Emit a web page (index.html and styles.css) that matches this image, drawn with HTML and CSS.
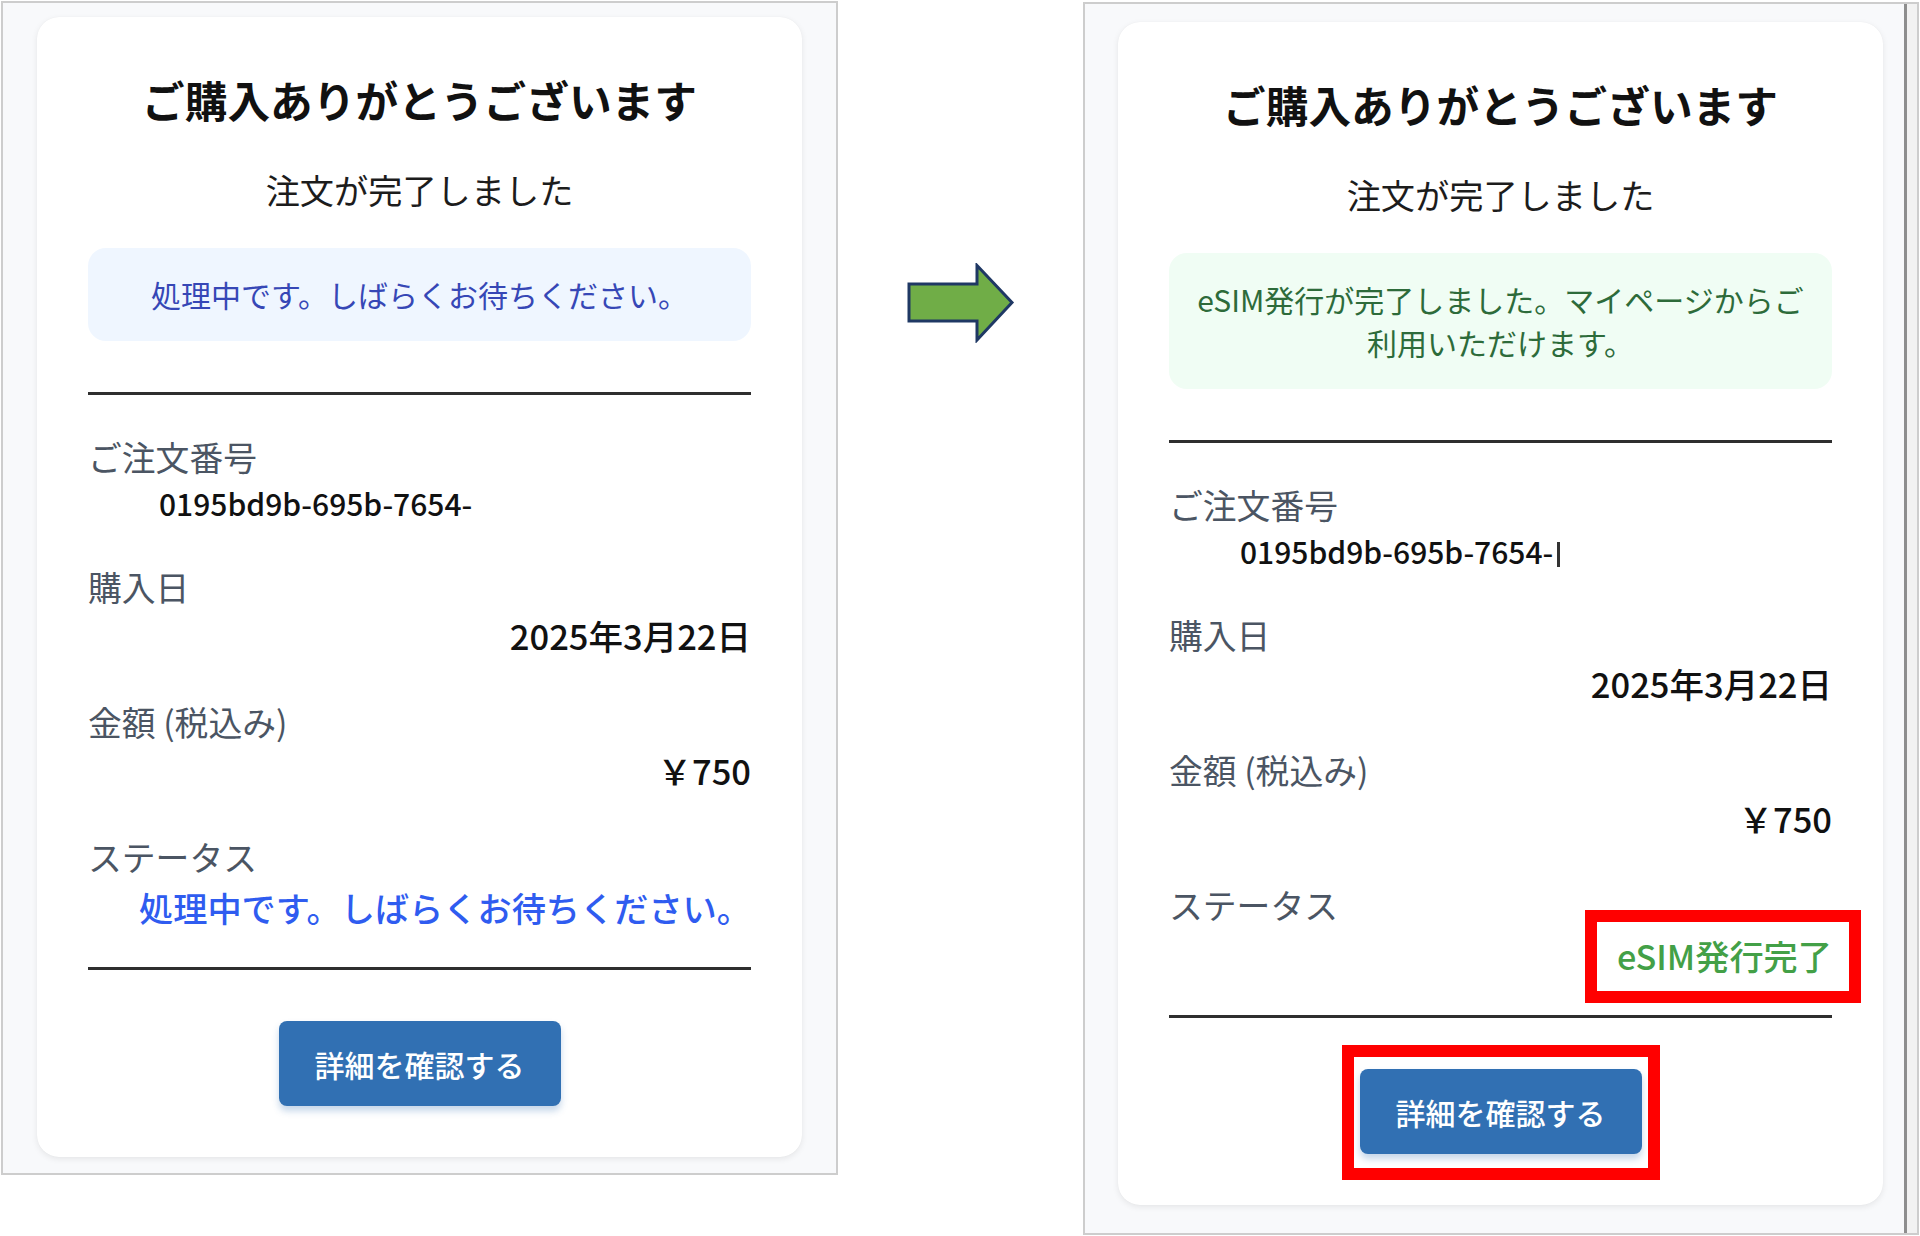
FILE: index.html
```html
<!DOCTYPE html>
<html lang="ja">
<head>
<meta charset="utf-8">
<title>ご購入ありがとうございます</title>
<link rel="stylesheet" href="styles.css">
</head>
<body>
<div class="stage">
  <section class="panel panel--before">
    <div class="card">
      <h1 class="title">ご購入ありがとうございます</h1>
      <p class="subtitle">注文が完了しました</p>
      <div class="notice notice--info">処理中です。しばらくお待ちください。</div>
      <hr class="rule rule--top">
      <dl class="fields">
        <div class="field">
          <dt class="label">ご注文番号</dt>
          <dd class="value value--id">0195bd9b-695b-7654-</dd>
        </div>
        <div class="field field--after-id">
          <dt class="label">購入日</dt>
          <dd class="value">2025年3月22日</dd>
        </div>
        <div class="field">
          <dt class="label">金額 (税込み)</dt>
          <dd class="value">￥750</dd>
        </div>
        <div class="field">
          <dt class="label">ステータス</dt>
          <dd class="value value--status status--pending">処理中です。しばらくお待ちください。</dd>
        </div>
      </dl>
      <hr class="rule rule--bottom">
      <div class="actions">
        <span class="btn-wrap"><button class="btn" type="button">詳細を確認する</button></span>
      </div>
    </div>
  </section>

  <svg class="arrow" width="108" height="80" viewBox="0 0 108 80" aria-hidden="true">
    <polygon points="2,21 70,21 70,2.5 105,39.5 70,77 70,58 2,58" fill="#70ad47" stroke="#1f3864" stroke-width="3" stroke-linejoin="miter"/>
  </svg>

  <section class="panel panel--after">
    <div class="viewport">
      <div class="card">
        <h1 class="title">ご購入ありがとうございます</h1>
        <p class="subtitle">注文が完了しました</p>
        <div class="notice notice--success">eSIM発行が完了しました。マイページからご<br>利用いただけます。</div>
        <hr class="rule rule--top">
        <dl class="fields">
          <div class="field">
            <dt class="label">ご注文番号</dt>
            <dd class="value value--id">0195bd9b-695b-7654-<span class="caret"></span></dd>
          </div>
          <div class="field field--after-id">
            <dt class="label">購入日</dt>
            <dd class="value">2025年3月22日</dd>
          </div>
          <div class="field">
            <dt class="label">金額 (税込み)</dt>
            <dd class="value">￥750</dd>
          </div>
          <div class="field">
            <dt class="label">ステータス</dt>
            <dd class="value value--status status--done">eSIM発行完了<span class="annot annot--status"></span></dd>
          </div>
        </dl>
        <hr class="rule rule--bottom">
        <div class="actions">
          <span class="btn-wrap"><button class="btn" type="button">詳細を確認する</button><span class="annot annot--btn"></span></span>
        </div>
      </div>
    </div>
    <div class="scrollbar"></div>
  </section>
</div>
</body>
</html>
```

FILE: styles.css
```css
* { box-sizing: border-box; }

html, body {
  margin: 0;
  padding: 0;
  background: #ffffff;
}

body {
  font-family: "Noto Sans CJK JP", "Noto Sans", sans-serif;
  color: #111111;
}

.stage {
  display: flex;
  align-items: flex-start;
  width: 1920px;
  height: 1236px;
}

.panel {
  background: #f8f9fb;
  border: 2px solid #cdcdcd;
}

.panel--before {
  width: 837px;
  margin: 1px 0 0 1px;
  padding: 14px 35px 16px 34px;
}

.arrow {
  display: block;
  flex: none;
  margin: 263px 0 0 69px;
}

.panel--after {
  width: 836px;
  margin: 2px 0 0 68px;
  display: flex;
  align-items: stretch;
}

.viewport {
  padding: 18px 21px 28px 33px;
}

.scrollbar {
  width: 13px;
  border-left: 3px solid #8e8e8e;
  background: #f2f2f2;
}

.card {
  width: 765px;
  background: #ffffff;
  border-radius: 22px;
  box-shadow: 0 2px 6px rgba(0, 0, 0, 0.08), 0 0 1px rgba(0, 0, 0, 0.06);
  padding: 52px 51px 51px 51px;
}

.title {
  margin: 0;
  font-size: 42.7px;
  line-height: 60px;
  font-weight: 700;
  text-align: center;
  color: #111111;
}

.subtitle {
  margin: 36px 0 0;
  font-size: 34.2px;
  line-height: 48px;
  font-weight: 400;
  text-align: center;
  color: #1c1c1c;
}

.notice {
  margin-top: 35px;
  padding: 25px 20px;
  border-radius: 18px;
  font-size: 30px;
  line-height: 43px;
  text-align: center;
}

.notice--info {
  background: #eff6ff;
  color: #3647b6;
}

.notice--success {
  background: #f0fdf4;
  color: #2d6b3a;
}

.rule {
  margin: 0;
  border: 0;
  border-top: 3px solid #2f2f2f;
  height: 0;
}

.rule--top { margin-top: 51px; }
.rule--bottom { margin-top: 36px; }

.fields {
  margin: 0;
}

.field {
  margin-top: 41px;
}

.field:first-child,
.field--after-id {
  margin-top: 38px;
}

.label {
  font-size: 33.8px;
  line-height: 48px;
  color: #4b5563;
}

.value {
  margin: 2px 0 0;
  font-size: 34.5px;
  line-height: 44px;
  font-weight: 500;
  color: #111111;
  text-align: right;
  position: relative;
}

.value--id {
  margin-top: 0;
  padding-left: 71px;
  font-size: 30px;
  text-align: left;
}

.caret {
  display: inline-block;
  width: 3px;
  height: 25px;
  margin-left: 4px;
  background: #333333;
  vertical-align: -3px;
}

.value--status {
  font-size: 34.2px;
  line-height: 48px;
  font-weight: 500;
}

.status--pending { color: #2f5cf0; }
.status--done { color: #43a047; }

.actions {
  margin-top: 51px;
  text-align: center;
}

.btn-wrap {
  position: relative;
  display: inline-block;
  vertical-align: top;
}

.btn {
  display: block;
  width: 282px;
  height: 85px;
  border: 0;
  border-radius: 8px;
  background: #3170b3;
  color: #ffffff;
  font-family: "Noto Sans CJK JP", "Noto Sans", sans-serif;
  font-size: 30px;
  font-weight: 500;
  box-shadow: 0 5px 7px rgba(49, 112, 179, 0.28);
  padding: 0;
}

.annot {
  position: absolute;
  border: 12px solid #ff0000;
  pointer-events: none;
}

.annot--status {
  right: -29px;
  top: -21px;
  width: 276px;
  height: 93px;
}

.annot--btn {
  left: -18px;
  top: -24px;
  width: 318px;
  height: 135px;
}
```
